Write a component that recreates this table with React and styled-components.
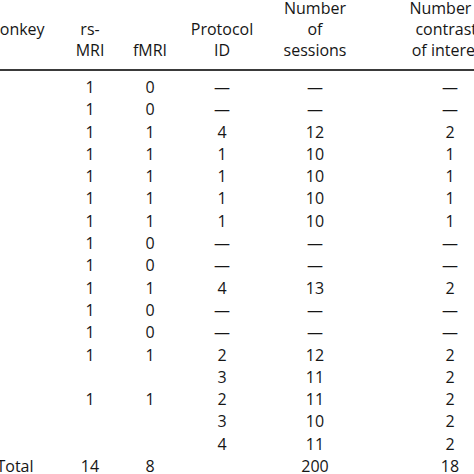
import React from "react";
import styled, { createGlobalStyle } from "styled-components";

const GlobalStyle = createGlobalStyle`
  html, body {
    margin: 0;
    padding: 0;
    background: #ffffff;
    overflow: hidden;
  }
  body {
    font-family: "Open Sans", "Noto Sans", sans-serif;
    color: #161616;
  }
`;

const rows = [
  ["", "1", "0", "—", "—", "—"],
  ["", "1", "0", "—", "—", "—"],
  ["", "1", "1", "4", "12", "2"],
  ["", "1", "1", "1", "10", "1"],
  ["", "1", "1", "1", "10", "1"],
  ["", "1", "1", "1", "10", "1"],
  ["", "1", "1", "1", "10", "1"],
  ["", "1", "0", "—", "—", "—"],
  ["", "1", "0", "—", "—", "—"],
  ["", "1", "1", "4", "13", "2"],
  ["", "1", "0", "—", "—", "—"],
  ["", "1", "0", "—", "—", "—"],
  ["", "1", "1", "2", "12", "2"],
  ["", "", "", "3", "11", "2"],
  ["", "1", "1", "2", "11", "2"],
  ["", "", "", "3", "10", "2"],
  ["", "", "", "4", "11", "2"],
  ["Total", "14", "8", "", "200", "18"],
];

const widths = [80, 70, 50, 94, 92, 178];

function App() {
  return (
    <>
      <GlobalStyle />
      <Table>
        <colgroup>
          {widths.map((w, i) => (
            <col key={i} style={{ width: w }} />
          ))}
        </colgroup>
        <thead>
          <tr>
            <HeadCell $middle>Monkey</HeadCell>
            <HeadCell>
              rs-
              <br />
              MRI
            </HeadCell>
            <HeadCell>fMRI</HeadCell>
            <HeadCell>
              Protocol
              <br />
              ID
            </HeadCell>
            <HeadCell>
              Number
              <br />
              of
              <br />
              sessions
            </HeadCell>
            <HeadCell>
              Number of
              <br />
              contrasts
              <br />
              of interest
            </HeadCell>
          </tr>
        </thead>
        <tbody>
          {rows.map((row, r) => (
            <tr key={r}>
              {row.map((cell, c) => (
                <Cell key={c} $first={r === 0}>
                  {cell}
                </Cell>
              ))}
            </tr>
          ))}
        </tbody>
      </Table>
    </>
  );
}

const Table = styled.table`
  table-layout: fixed;
  border-collapse: collapse;
  width: 564px;
  margin: -2px 0 0 -25px;
  font-size: 16px;
  font-weight: 500;
`;

const HeadCell = styled.th`
  font-weight: 500;
  text-align: center;
  white-space: nowrap;
  line-height: 21px;
  padding: 0 0 8px 0;
  vertical-align: ${(p) => (p.$middle ? "middle" : "bottom")};
  border-bottom: 2px solid #3a3a3a;
`;

const Cell = styled.td`
  text-align: center;
  white-space: nowrap;
  line-height: 22.3px;
  height: 22.3px;
  padding: ${(p) => (p.$first ? "5px 0 0 0" : "0")};
`;

export default App;
